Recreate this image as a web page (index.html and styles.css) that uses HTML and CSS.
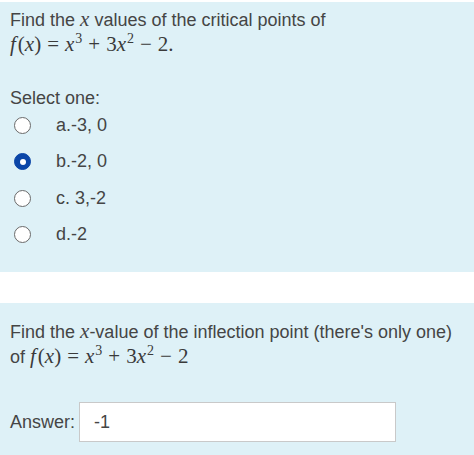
FILE: index.html
```html
<!DOCTYPE html>
<html>
<head>
<meta charset="utf-8">
<link rel="stylesheet" href="styles.css">
</head>
<body>
<div class="panel q1">
  <div class="qtext">
    <p class="line">Find the <span class="mi">x</span> values of the critical points of</p>
    <p class="line math"><span class="mi fn">f</span>(<span class="mi">x</span>)<span class="op">=</span><span class="mi">x</span><sup>3</sup><span class="op">+</span>3<span class="mi">x</span><sup>2</sup><span class="op">−</span>2.</p>
  </div>
  <div class="prompt">Select one:</div>
  <div class="options">
    <div class="opt"><span class="radio"></span><span class="label">a.-3, 0</span></div>
    <div class="opt"><span class="radio checked"></span><span class="label">b.-2, 0</span></div>
    <div class="opt"><span class="radio"></span><span class="label">c. 3,-2</span></div>
    <div class="opt"><span class="radio"></span><span class="label">d.-2</span></div>
  </div>
</div>
<div class="panel q2">
  <div class="qtext">
    <p class="line">Find the <span class="mi">x</span>-value of the inflection point (there's only one)</p>
    <p class="line">of <span class="mathin"><span class="mi fn">f</span>(<span class="mi">x</span>)<span class="op">=</span><span class="mi">x</span><sup>3</sup><span class="op">+</span>3<span class="mi">x</span><sup>2</sup><span class="op">−</span>2</span></p>
  </div>
  <div class="answer">
    <span class="alabel">Answer:</span>
    <span class="abox">-1</span>
  </div>
</div>
</body>
</html>
```
FILE: styles.css
```css
html, body {
  margin: 0;
  padding: 0;
  background: #ffffff;
}
body {
  font-family: "Liberation Sans", Arial, sans-serif;
  color: #454545;
  font-size: 18px;
}
.panel {
  background: #def1f7;
  padding: 0 10px;
}
.q1 {
  margin-top: 2px;
  height: 270px;
  box-sizing: border-box;
  padding-top: 5px;
}
.q2 {
  margin-top: 31px;
  height: 152px;
  box-sizing: border-box;
  padding-top: 16px;
}
.qtext .line {
  margin: 0;
  line-height: 24px;
  white-space: nowrap;
}
.mi {
  font-family: "Liberation Serif", "Times New Roman", serif;
  font-style: italic;
  font-size: 21px;
}
.fn {
  margin-right: 2px;
}
.math, .mathin {
  font-family: "Liberation Serif", "Times New Roman", serif;
  font-size: 21px;
  color: #3a3a3a;
}
.op {
  margin: 0 6px;
}
sup {
  font-size: 14px;
  line-height: 0;
  vertical-align: 8px;
  margin-left: 1px;
}
.prompt {
  margin-top: 30px;
  line-height: 24px;
}
.options {
  margin-top: -3px;
  display: flex;
  flex-direction: column;
}
.opt {
  height: 36.5px;
  display: flex;
  align-items: center;
}
.radio {
  width: 15px;
  height: 15px;
  border: 1.5px solid #6a6a6a;
  border-radius: 50%;
  background: #fff;
  margin-left: 4px;
  flex: none;
  box-sizing: content-box;
  position: relative;
}
.radio.checked {
  border-color: #0b46a8;
  background: #0b46a8;
}
.radio.checked::after {
  content: "";
  position: absolute;
  left: 50%;
  top: 50%;
  width: 6px;
  height: 6px;
  margin: -3px 0 0 -3px;
  border-radius: 50%;
  background: #fff;
}
.label {
  margin-left: 25px;
}
.answer {
  margin-top: 33px;
  display: flex;
  align-items: center;
}
.alabel {
  line-height: 24px;
}
.abox {
  margin-left: 4px;
  width: 301px;
  height: 38px;
  border: 1px solid #c9c9c9;
  background: #fff;
  display: flex;
  align-items: center;
  padding-left: 14px;
  box-sizing: content-box;
  flex: none;
}
```
